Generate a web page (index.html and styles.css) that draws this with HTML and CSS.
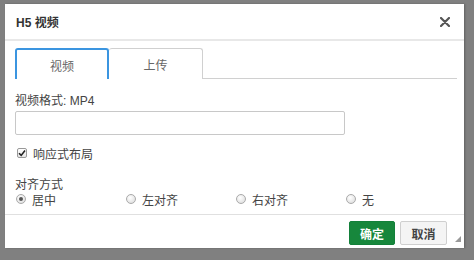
FILE: index.html
```html
<!DOCTYPE html>
<html>
<head>
<meta charset="utf-8">
<link rel="stylesheet" href="styles.css">
</head>
<body>
<div class="dialog">
  <div class="header">
    <span class="title">H5 视频</span>
    <svg class="close" width="10" height="10" viewBox="0 0 10 10"><path d="M1 1L9 9M9 1L1 9" stroke="#555" stroke-width="2.2" stroke-linecap="round"/></svg>
  </div>
  <div class="body">
    <div class="tabs">
      <div class="tab active">视频</div>
      <div class="tab">上传</div>
    </div>
    <div class="label first">视频格式: MP4</div>
    <div class="input"></div>
    <div class="check-row">
      <span class="checkbox"><svg width="8" height="8" viewBox="0 0 8 8"><path d="M1 4.2L3.2 6.4L7 1.5" stroke="#222" stroke-width="1.6" fill="none"/></svg></span>
      <span>响应式布局</span>
    </div>
    <div class="label align">对齐方式</div>
    <div class="radios">
      <div class="radio-item"><span class="radio checked"></span><span>居中</span></div>
      <div class="radio-item"><span class="radio"></span><span>左对齐</span></div>
      <div class="radio-item"><span class="radio"></span><span>右对齐</span></div>
      <div class="radio-item"><span class="radio"></span><span>无</span></div>
    </div>
  </div>
  <div class="footer">
    <button class="btn ok">确定</button>
    <button class="btn cancel">取消</button>
  </div>
  <div class="grip"></div>
</div>
</body>
</html>
```
FILE: styles.css
```css
html, body {
  margin: 0;
  padding: 0;
  background: #808080;
  width: 474px;
  height: 260px;
  overflow: hidden;
}
body {
  padding-top: 4px;
  padding-left: 5px;
  box-sizing: border-box;
  font-family: "Liberation Sans", "Noto Sans CJK SC", sans-serif;
  font-size: 12px;
  color: #444;
}
.dialog {
  position: relative;
  width: 459px;
  height: 244px;
  background: #fff;
  display: flex;
  flex-direction: column;
  box-shadow: 1px 0 2px rgba(0,0,0,0.25);
}
.header {
  height: 35px;
  border-bottom: 2px solid #e8e8e8;
  display: flex;
  align-items: center;
  justify-content: space-between;
  padding: 0 14px 0 11px;
  flex-shrink: 0;
}
.title {
  font-weight: bold;
  font-size: 12px;
  color: #333;
}
.close {
  display: block;
  margin-top: 1px;
}
.body {
  padding: 7px 7px 0 10px;
  flex: 1;
}
.tabs {
  display: flex;
  border-bottom: 1px solid #d0d0d0;
  height: 30px;
}
.tab {
  width: 94px;
  box-sizing: border-box;
  border: 1px solid #d0d0d0;
  border-bottom: none;
  border-radius: 3px 3px 0 0;
  display: flex;
  align-items: center;
  justify-content: center;
  color: #666;
  font-size: 12px;
  margin-bottom: -1px;
  background: #fff;
  height: 31px;
}
.tab + .tab {
  border-left: none;
}
.tab.active {
  border: 2px solid #3b95e0;
  border-bottom: none;
  height: 31px;
  padding-top: 1px;
}
.label {
  color: #444;
  font-size: 12px;
  line-height: 14px;
}
.label.first {
  margin-top: 15px;
}
.input {
  margin-top: 3px;
  width: 330px;
  height: 24px;
  box-sizing: border-box;
  border: 1px solid #c8c8c8;
  border-radius: 2px;
}
.check-row {
  margin-top: 11px;
  display: flex;
  align-items: center;
  height: 14px;
  padding-left: 2px;
}
.checkbox {
  width: 10px;
  height: 10px;
  box-sizing: border-box;
  border: 1px solid #999;
  border-radius: 2px;
  background: linear-gradient(#fff, #e6e6e6);
  display: flex;
  align-items: center;
  justify-content: center;
  margin-right: 6px;
}
.checkbox svg { display: block; }
.label.align {
  margin-top: 18px;
}
.radios {
  display: flex;
  margin-top: 0px;
  height: 14px;
  align-items: center;
}
.radio-item {
  width: 110px;
  display: flex;
  align-items: center;
  padding-left: 1px;
  box-sizing: border-box;
}
.radio {
  width: 10px;
  height: 10px;
  box-sizing: border-box;
  border: 1px solid #aaa;
  border-radius: 50%;
  background: radial-gradient(circle at 40% 35%, #fff, #d8d8d8);
  margin-right: 6px;
  position: relative;
}
.radio.checked::after {
  content: "";
  position: absolute;
  left: 2px;
  top: 2px;
  width: 4px;
  height: 4px;
  border-radius: 50%;
  background: #555;
}
.footer {
  border-top: 1px solid #e0e0e0;
  height: 34px;
  display: flex;
  justify-content: flex-end;
  align-items: flex-start;
  padding: 6px 17px 0 0;
  box-sizing: border-box;
  gap: 5px;
  flex-shrink: 0;
}
.btn {
  height: 24px;
  font-family: "Liberation Sans", "Noto Sans CJK SC", sans-serif;
  font-size: 12px;
  font-weight: bold;
  border-radius: 2px;
  padding: 0;
  cursor: pointer;
}
.btn.ok {
  width: 46px;
  background: #17873c;
  border: 1px solid #13803a;
  color: #fff;
}
.btn.cancel {
  width: 47px;
  background: #f4f4f4;
  border: 1px solid #cfcfcf;
  color: #444;
}
.grip {
  position: absolute;
  right: 3px;
  bottom: 6px;
  width: 0;
  height: 0;
  border-left: 6px solid transparent;
  border-bottom: 6px solid #999;
}
```
